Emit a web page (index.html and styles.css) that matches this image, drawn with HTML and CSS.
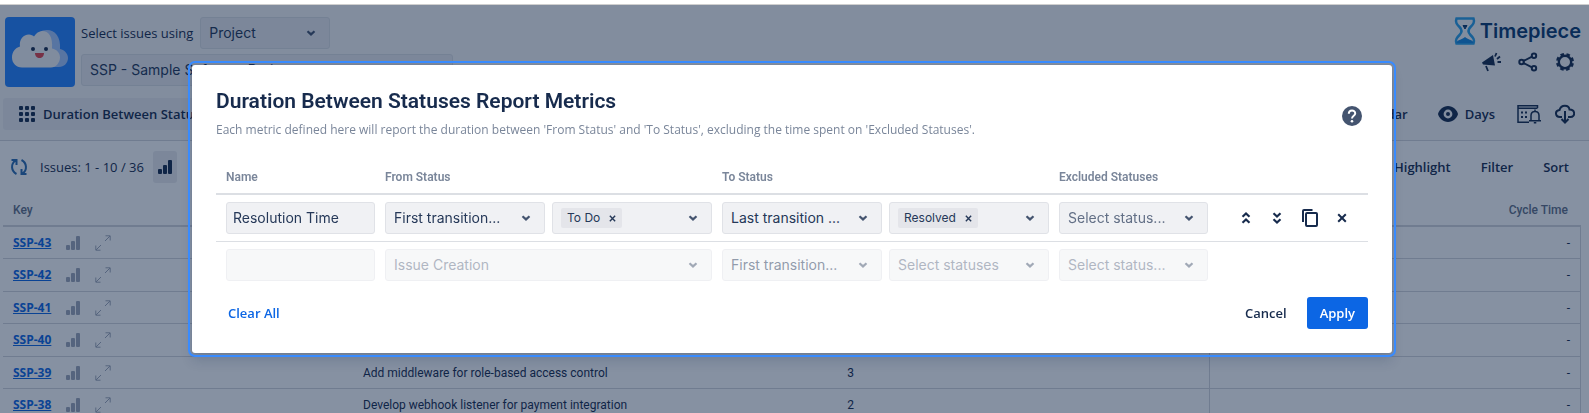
FILE: index.html
```html
<!DOCTYPE html>
<html lang="en">
<head>
    <meta charset="UTF-8">
    <meta name="viewport" content="width=device-width, initial-scale=1.0">
    <title>Timepiece</title>
    <link rel="stylesheet" href="styles.css">
</head>
<body>
    <svg class="sprite" aria-hidden="true">
        <symbol id="chevron" viewBox="0 0 10 10"><path d="M1.5 3.2 5 6.4 8.500 3.2" fill="none" stroke="currentColor" stroke-width="2.200"/></symbol>
        <symbol id="bars" viewBox="0 0 14 14"><g fill="currentColor"><rect y="9" width="4" height="5" rx="1"/><rect x="5" y="5" width="4" height="9" rx="1"/><rect x="10" width="4" height="14" rx="1"/></g></symbol>
        <symbol id="expand" viewBox="0 0 16 16"><path d="M10 6 15 1M10.500 .8h4.700v4.700M6 10l-5 5M.8 10.500v4.700h4.700" fill="none" stroke="currentColor" stroke-width="1"/></symbol>
        <symbol id="cross" viewBox="0 0 10 10"><path d="m1.200 1.200 7.600 7.600m0-7.600L1.200 8.800" fill="none" stroke="currentColor" stroke-width="2"/></symbol>
    </svg>

    <div class="app">
        <header class="header">
            <div class="topbar">
                <svg class="avatar" viewBox="0 0 70 70" aria-hidden="true">
                    <rect width="70" height="70" rx="4" fill="#2684ff"/>
                    <path d="M27 50C22 24 31 13 42 13c8 0 14 7 13 19 5 1 8 5 8 9 0 5-4 9-9 9z" fill="#a6c8ff"/>
                    <path d="M17 50.500C11 50.500 7 46 7 40.500 7 35 10 31 15 29.500c-1-7 3-12 9-12 2 0 4 1 5 2 2-3 4-5 8-5.500 7 0 11 6 10 17.500 5 1 8 4.500 8 9 0 5-4 10-9 10z" fill="#f4f5f7"/>
                    <circle cx="28" cy="32" r="2" fill="#172b4d"/>
                    <circle cx="41" cy="32" r="2" fill="#172b4d"/>
                    <path d="M30 36h9c0 3-2 5-4.500 5S30 39 30 36z" fill="#e2434c"/>
                </svg>
                <div class="source">
                    <div class="source-row">
                        <label for="source">Select issues using</label>
                        <div class="select source-type">
                            <select id="source"><option>Project</option></select>
                            <svg><use href="#chevron"/></svg>
                        </div>
                    </div>
                    <div class="select source-project">
                        <select aria-label="Project"><option>SSP - Sample Software Project</option></select>
                        <svg><use href="#chevron"/></svg>
                    </div>
                </div>
                <div class="brand">
                    <div class="brand-name">
                        <svg width="22" height="28" viewBox="0 0 22 28" aria-hidden="true">
                            <path d="M2.500 1.500h17c1.500 4-.5 6-3 8.500-2.500 2.500-2.500 5.500 0 8 2.500 2.500 4.500 4.500 3 8.500h-17c-1.500-4 .5-6 3-8.500 2.500-2.500 2.500-5.500 0-8-2.500-2.500-4.500-4.500-3-8.500z" fill="none" stroke="#2aa0e8" stroke-width="2.500"/>
                            <path d="M2.500 26c0-3 5-3 8.500-6 3.500 3 8.500 3 8.500 6z" fill="#1787dd"/>
                            <path d="M9 8.500h4L11 12z" fill="#0b3a6f" stroke="#0b3a6f"/>
                        </svg>
                        <span>Timepiece</span>
                    </div>
                    <div class="brand-actions">
                        <button aria-label="Announcements"><svg width="20" height="20" viewBox="0 0 20 20"><path d="M1 10.500 12 3l2 10.500L2 12.500z" fill="currentColor"/><path d="m5 14 2 5M14 4.500 15.500 1M16 7l3-2.500M16.500 10h3.500" fill="none" stroke="currentColor" stroke-width="1.800"/></svg></button>
                        <button aria-label="Share"><svg width="20" height="20" viewBox="0 0 20 20"><g fill="none" stroke="currentColor" stroke-width="2"><circle cx="3.500" cy="10" r="2.200"/><circle cx="16" cy="3.700" r="2.200"/><circle cx="16" cy="16.300" r="2.200"/><path d="m5.500 9 8.500-4.300M5.500 11l8.500 4.300"/></g></svg></button>
                        <button aria-label="Settings"><svg width="20" height="20" viewBox="0 0 20 20"><circle cx="10" cy="10" r="6.200" fill="none" stroke="currentColor" stroke-width="2.400"/><circle cx="10" cy="10" r="7.900" fill="none" stroke="currentColor" stroke-width="2.200" stroke-dasharray="3.600 2.600" stroke-dashoffset="-1.300"/></svg></button>
                    </div>
                </div>
            </div>

            <div class="report-bar">
                <button class="report-button">
                    <svg width="16" height="16" viewBox="0 0 16 16"><g fill="currentColor"><rect width="4" height="4" rx="1"/><rect x="6" width="4" height="4" rx="1"/><rect x="12" width="4" height="4" rx="1"/><rect y="6" width="4" height="4" rx="1"/><rect x="6" y="6" width="4" height="4" rx="1"/><rect x="12" y="6" width="4" height="4" rx="1"/><rect y="12" width="4" height="4" rx="1"/><rect x="6" y="12" width="4" height="4" rx="1"/><rect x="12" y="12" width="4" height="4" rx="1"/></g></svg>
                    Duration Between Statuses
                </button>
                <div class="report-actions">
                    <button>Calendar</button>
                    <button class="days"><svg width="20" height="16" viewBox="0 0 20 16"><path d="M10 0c5 0 9 4 10 8-1 4-5 8-10 8S1 12 0 8c1-4 5-8 10-8z" fill="currentColor"/><circle cx="10" cy="8" r="3.200" fill="none" stroke="#f7f8f8" stroke-width="2.400"/></svg>Days</button>
                    <button aria-label="Schedule"><svg width="24" height="20" viewBox="0 0 24 20"><g fill="none" stroke="currentColor" stroke-width="1.500"><path d="M20.500 4V1.700H1v16.600h11M1 4.200h19.500"/><path d="M14 16.500v-5c0-5.500 8-5.500 8 0v5M12 16.800h12M18 7.500V5.500M16.800 18.800h2.500"/></g><path d="M4 7.500h2v2H4zM8 7.500h2v2H8zM4 12h2v2H4zM8 12h2v2H8z" fill="currentColor"/></svg></button>
                    <button aria-label="Export"><svg width="20" height="20" viewBox="0 0 20 20"><g fill="none" stroke="currentColor" stroke-width="2"><path d="M7 13H5c-5 0-5.500-6.500-.5-7C6 0 14 .5 14.500 5.500 20.500 5.500 20.500 13 15.500 13H13"/><path d="M10 7v11M6.500 15 10 18.500l3.500-3.500"/></g></svg></button>
                </div>
            </div>
        </header>

        <div class="toolbar">
            <button class="refresh" aria-label="Refresh"><svg width="18" height="18" viewBox="0 0 18 18"><path d="M6.500 16C1 13 .5 6 5.500 2.500M1.500 2h5v5M11.500 2c5.500 3 6 10 1 13.500M16.500 16h-5v-5" fill="none" stroke="currentColor" stroke-width="2"/></svg></button>
            <span class="count">Issues: 1 - 10 / 36</span>
            <button class="chart-button" aria-label="Chart"><svg width="14" height="14"><use href="#bars"/></svg></button>
            <div class="toolbar-actions">
                <button>Highlight</button>
                <button>Filter</button>
                <button>Sort</button>
            </div>
        </div>

        <table class="issues">
            <colgroup><col class="col-key"><col class="col-summary"><col class="col-gap"><col class="col-cycle"></colgroup>
            <thead>
                <tr><th>Key</th><th></th><th></th><th class="num">Cycle Time</th></tr>
            </thead>
            <tbody>
                <tr><td><div class="key"><a href="#">SSP-43</a><svg width="14" height="14"><use href="#bars"/></svg><svg width="16" height="16"><use href="#expand"/></svg></div></td><td></td><td></td><td class="num">-</td></tr>
                <tr><td><div class="key"><a href="#">SSP-42</a><svg width="14" height="14"><use href="#bars"/></svg><svg width="16" height="16"><use href="#expand"/></svg></div></td><td></td><td></td><td class="num">-</td></tr>
                <tr><td><div class="key"><a href="#">SSP-41</a><svg width="14" height="14"><use href="#bars"/></svg><svg width="16" height="16"><use href="#expand"/></svg></div></td><td></td><td></td><td class="num">-</td></tr>
                <tr><td><div class="key"><a href="#">SSP-40</a><svg width="14" height="14"><use href="#bars"/></svg><svg width="16" height="16"><use href="#expand"/></svg></div></td><td></td><td></td><td class="num">-</td></tr>
                <tr><td><div class="key"><a href="#">SSP-39</a><svg width="14" height="14"><use href="#bars"/></svg><svg width="16" height="16"><use href="#expand"/></svg></div></td><td><div class="summary"><span>Add middleware for role-based access control</span><span>3</span></div></td><td></td><td class="num">-</td></tr>
                <tr><td><div class="key"><a href="#">SSP-38</a><svg width="14" height="14"><use href="#bars"/></svg><svg width="16" height="16"><use href="#expand"/></svg></div></td><td><div class="summary"><span>Develop webhook listener for payment integration</span><span>2</span></div></td><td></td><td class="num">-</td></tr>
            </tbody>
        </table>
    </div>

    <div class="blanket">
        <div class="modal" role="dialog" aria-labelledby="modal-title">
            <div class="modal-header">
                <div>
                    <h1 id="modal-title">Duration Between Statuses Report Metrics</h1>
                    <p>Each metric defined here will report the duration between 'From Status' and 'To Status', excluding the time spent on 'Excluded Statuses'.</p>
                </div>
                <button class="help" aria-label="Help"><svg width="20" height="20" viewBox="0 0 20 20"><circle cx="10" cy="10" r="10" fill="#44546f"/><path d="M6.800 7.800c0-4.300 6.400-4.300 6.400-.4 0 2.400-3.200 2.300-3.200 5" fill="none" stroke="#fff" stroke-width="2"/><circle cx="10" cy="15.200" r="1.300" fill="#fff"/></svg></button>
            </div>

            <table class="metrics">
                <colgroup><col class="col-name"><col class="col-status"><col class="col-status"><col class="col-name"><col></colgroup>
                <thead>
                    <tr><th>Name</th><th>From Status</th><th>To Status</th><th>Excluded Statuses</th><th></th></tr>
                </thead>
                <tbody>
                    <tr>
                        <td><input type="text" aria-label="Name" value="Resolution Time"></td>
                        <td>
                            <div class="pair">
                                <div class="select"><select aria-label="From transition"><option>First transition...</option></select><svg><use href="#chevron"/></svg></div>
                                <div class="select">
                                    <select aria-label="From statuses"><option></option></select>
                                    <span class="tag">To Do<button aria-label="Remove To Do"><svg><use href="#cross"/></svg></button></span>
                                    <svg><use href="#chevron"/></svg>
                                </div>
                            </div>
                        </td>
                        <td>
                            <div class="pair">
                                <div class="select"><select aria-label="To transition"><option>Last transition ...</option></select><svg><use href="#chevron"/></svg></div>
                                <div class="select">
                                    <select aria-label="To statuses"><option></option></select>
                                    <span class="tag">Resolved<button aria-label="Remove Resolved"><svg><use href="#cross"/></svg></button></span>
                                    <svg><use href="#chevron"/></svg>
                                </div>
                            </div>
                        </td>
                        <td><div class="select placeholder"><select aria-label="Excluded statuses"><option>Select status...</option></select><svg><use href="#chevron"/></svg></div></td>
                        <td>
                            <div class="row-actions">
                                <button aria-label="Move up"><svg width="12" height="14" viewBox="0 0 12 14"><path d="M2.500 5.700 6 2.500l3.500 3.200M2.500 11.700 6 8.500l3.500 3.200" fill="none" stroke="currentColor" stroke-width="2.200"/></svg></button>
                                <button aria-label="Move down"><svg width="12" height="14" viewBox="0 0 12 14"><path d="M2.500 2.300 6 5.500l3.500-3.200M2.500 8.300 6 11.500l3.500-3.200" fill="none" stroke="currentColor" stroke-width="2.200"/></svg></button>
                                <button aria-label="Copy"><svg width="16" height="18" viewBox="0 0 16 18"><path d="M1 13V2q0-1 1-1h8.500" fill="none" stroke="currentColor" stroke-width="2"/><rect x="4" y="4" width="11" height="13" rx="1" fill="none" stroke="currentColor" stroke-width="2"/></svg></button>
                                <button aria-label="Delete"><svg width="10" height="10"><use href="#cross"/></svg></button>
                            </div>
                        </td>
                    </tr>
                    <tr class="disabled">
                        <td><input type="text" aria-label="Name" disabled></td>
                        <td><div class="select placeholder"><select aria-label="From transition" disabled><option>Issue Creation</option></select><svg><use href="#chevron"/></svg></div></td>
                        <td>
                            <div class="pair">
                                <div class="select"><select aria-label="To transition" disabled><option>First transition...</option></select><svg><use href="#chevron"/></svg></div>
                                <div class="select placeholder"><select aria-label="To statuses" disabled><option>Select statuses</option></select><svg><use href="#chevron"/></svg></div>
                            </div>
                        </td>
                        <td><div class="select placeholder"><select aria-label="Excluded statuses" disabled><option>Select status...</option></select><svg><use href="#chevron"/></svg></div></td>
                        <td></td>
                    </tr>
                </tbody>
            </table>

            <div class="modal-footer">
                <button class="link-button">Clear All</button>
                <button class="cancel">Cancel</button>
                <button class="primary">Apply</button>
            </div>
        </div>
    </div>
</body>
</html>
```
FILE: styles.css
```css
* {
    box-sizing: border-box;
}
body {
    margin: 0;
    height: 100vh;
    overflow: hidden;
    background-color: white;
    color: #172b4d;
    font-family: "Open Sans", "Noto Sans", sans-serif;
    font-size: 13px;
    line-height: 20px;
}
button {
    display: flex;
    align-items: center;
    justify-content: center;
    padding: 0;
    border: none;
    background: none;
    color: inherit;
    font: inherit;
    font-weight: 600;
    cursor: pointer;
}
.sprite {
    display: none;
}
.app {
    margin-top: 4px;
    border-top: 1px solid #cfcfcf;
}

/* selects and inputs */
.select {
    display: grid;
    align-items: center;
    min-width: 0;
}
.select > * {
    grid-area: 1 / 1;
}
.select > svg {
    justify-self: end;
    width: 10px;
    height: 10px;
    margin-right: 14px;
    color: #44546f;
    pointer-events: none;
}
select,
input {
    width: 100%;
    height: 32px;
    border: 1px solid #e0e2e7;
    border-radius: 3px;
    background-color: #f0f1f4;
    color: #253858;
    font-family: Inter, sans-serif;
    font-size: 14px;
    appearance: none;
    opacity: 1;
}
select {
    padding: 0 30px 2px 8px;
}
input {
    padding: 0 6px 2px;
}
.placeholder select {
    color: #626f86;
}

/* header */
.header {
    padding: 12px 8px 10px 3px;
    border-bottom: 1px solid #d4d6dc;
    background-color: #f7f8f8;
}
.topbar {
    display: flex;
    gap: 6px;
    padding-left: 2px;
}
.avatar {
    width: 70px;
    height: 70px;
}
.source {
    display: flex;
    flex-direction: column;
    gap: 5px;
}
.source-row {
    display: flex;
    align-items: center;
    gap: 7px;
}
.source select {
    background-color: #ebecf0;
    border-color: #dcdfe4;
}
.source-type {
    width: 130px;
}
.source-project {
    width: 372px;
}
.brand {
    display: flex;
    flex-direction: column;
    gap: 7px;
    margin-left: auto;
}
.brand-name {
    display: flex;
    align-items: center;
    gap: 4px;
    color: #0b3a6f;
    font-family: Inter, sans-serif;
    font-size: 20px;
    font-weight: 600;
}
.brand-actions {
    display: flex;
    justify-content: flex-end;
    gap: 17px;
    padding-right: 6px;
}
.report-bar {
    display: flex;
    justify-content: space-between;
    margin-top: 11px;
}
.report-button {
    justify-content: flex-start;
    gap: 8px;
    width: 300px;
    height: 32px;
    padding-left: 16px;
    border-radius: 3px;
    background-color: #ebecf0;
}
.report-actions {
    display: flex;
    align-items: center;
    gap: 22px;
    padding-right: 6px;
}
.report-actions > :first-child {
    margin-right: 8px;
}
.report-actions > :last-child {
    margin-left: -8px;
}
.days {
    gap: 7px;
}

/* toolbar */
.toolbar {
    display: flex;
    align-items: center;
    margin-top: 10px;
    padding: 0 20px 0 10px;
}
.refresh {
    color: #2c6cb0;
}
.count {
    margin: 0 9px 0 12px;
}
.chart-button {
    width: 24px;
    height: 32px;
    border-radius: 3px;
    background-color: #ebecf0;
}
.toolbar-actions {
    display: flex;
    gap: 30px;
    margin-left: auto;
}

/* issue table */
.issues {
    width: calc(100% - 11px);
    margin-left: 3px;
    border-spacing: 0;
    table-layout: fixed;
    font-family: Roboto, sans-serif;
    font-size: 12px;
    line-height: 18px;
}
.issues th,
.issues td {
    padding: 0 10px;
    text-align: left;
}
.issues th {
    height: 44px;
    padding-top: 12px;
    border-bottom: 2px solid #d4d6dc;
    color: #626f86;
    font-weight: 500;
}
.issues td {
    height: 32px;
    border-bottom: 1px solid #d4d6dc;
}
.issues tr:nth-child(even) td {
    height: 33px;
}
.issues td:nth-child(n+3) {
    border-right: 1px solid #d4d6dc;
}
.issues .num {
    text-align: right;
}
.issues th.num {
    padding-right: 13px;
}
.col-key {
    width: 350px;
}
.col-summary {
    width: 511px;
}
.col-gap {
    width: 346px;
}
.key {
    display: flex;
    align-items: center;
    gap: 15px;
    color: #a0a8b8;
    font-family: "Open Sans", sans-serif;
}
.key a {
    color: #0c66e4;
    font-weight: 700;
}
.summary {
    display: flex;
    justify-content: space-between;
}

/* modal */
.blanket {
    position: fixed;
    inset: 5px 0 0;
    display: flex;
    justify-content: center;
    align-items: flex-start;
    padding: 60px 5px 0 0;
    background-color: rgba(9, 30, 66, 0.49);
}
.modal {
    width: 1200px;
    padding: 24px;
    border-radius: 3px;
    outline: 2px solid #388bff;
    outline-offset: 2px;
    background-color: white;
    box-shadow: 0 8px 12px rgba(9, 30, 66, 0.15), 0 0 1px rgba(9, 30, 66, 0.31);
}
.modal-header {
    display: flex;
    justify-content: space-between;
    align-items: flex-end;
}
.modal h1 {
    margin: 0 0 8px;
    font-family: Roboto, sans-serif;
    font-size: 21px;
    font-weight: 600;
    line-height: 24px;
}
.modal p {
    margin: 0;
    color: #7a869a;
    font-size: 12px;
    line-height: 18px;
}
.help {
    margin: 0 6px 13px;
}
.metrics {
    width: 100%;
    margin-top: 24px;
    border-spacing: 0;
    table-layout: fixed;
}
.metrics th {
    padding: 5px 0 7px 10px;
    border-bottom: 2px solid #dcdfe4;
    color: #7a869a;
    font-family: Roboto, sans-serif;
    font-size: 12px;
    font-weight: 600;
    line-height: 18px;
    text-align: left;
}
.metrics td {
    padding: 7px 0 7px 10px;
    line-height: 0;
}
.metrics tr:first-child td {
    border-bottom: 1px solid #dcdfe4;
}
.col-name {
    width: 159px;
}
.col-status {
    width: 337px;
}
.pair {
    display: grid;
    grid-template-columns: 1fr 1fr;
    gap: 7px;
}
.tag {
    display: flex;
    align-items: center;
    justify-self: start;
    gap: 9px;
    height: 20px;
    margin-left: 9px;
    padding: 0 6px;
    border-radius: 2px;
    background-color: #e4e5ea;
    color: #253858;
    font-family: Inter, sans-serif;
    font-size: 12px;
}
.tag svg {
    width: 7px;
    height: 7px;
}
.row-actions {
    display: flex;
    align-items: center;
    justify-content: space-between;
    padding: 0 21px 0 22px;
}
.disabled .select,
.disabled input {
    opacity: 0.5;
}
.modal-footer {
    display: flex;
    align-items: center;
    margin-top: 9px;
}
.modal-footer button {
    height: 32px;
}
.link-button {
    margin-right: auto;
    padding-left: 12px;
    color: #0c66e4;
}
.primary {
    margin-left: 20px;
    padding: 0 13px;
    border-radius: 3px;
    background-color: #0c66e4;
    color: white;
}
```
